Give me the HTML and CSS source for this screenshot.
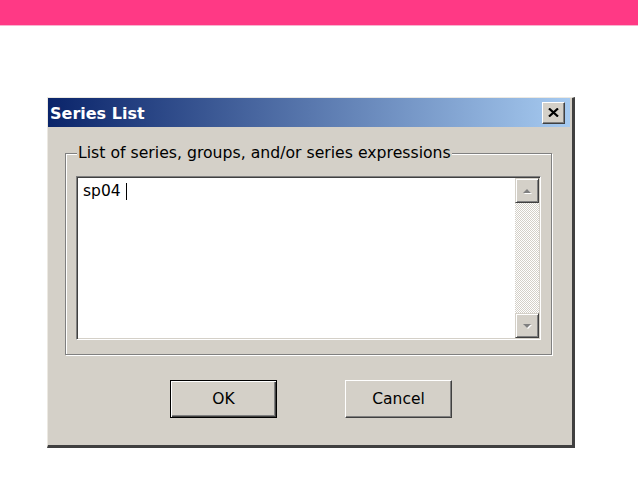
FILE: index.html
```html
<!DOCTYPE html>
<html lang="en">
<head>
    <meta charset="UTF-8">
    <title>Series List</title>
    <link rel="stylesheet" href="styles.css">
</head>
<body>
    <div class="topbar"></div>

    <div class="dialog">
        <div class="titlebar">
            <span class="title">Series List</span>
            <button class="close" title="Close">
                <svg width="11" height="9" viewBox="0 0 11 9">
                    <path d="M1 0.5 L10 8.5 M10 0.5 L1 8.5" stroke="#000" stroke-width="2.2" fill="none"/>
                </svg>
            </button>
        </div>

        <fieldset class="group">
            <legend>List of series, groups, and/or series expressions</legend>
            <div class="edit">
                <div class="edit-text">sp04 <span class="caret"></span></div>
                <div class="scroll">
                    <div class="scroll-btn"><span class="arrow up"></span></div>
                    <div class="scroll-track"></div>
                    <div class="scroll-btn"><span class="arrow down"></span></div>
                </div>
            </div>
        </fieldset>

        <div class="actions">
            <button class="btn default">OK</button>
            <button class="btn">Cancel</button>
        </div>
    </div>
</body>
</html>
```

FILE: styles.css
```css
body {
    margin: 0;
    background: #fff;
    font-family: "DejaVu Sans", Verdana, sans-serif;
    font-size: 15.5px;
    color: #000;
}
.topbar {
    height: 25px;
    background: #ff3985;
    border-bottom: 1px solid #f9b3cf;
}
.dialog {
    margin: 71px 0 0 47px;
    width: 528px;
    height: 351px;
    box-sizing: border-box;
    background: #d4d0c8;
    border-style: solid;
    border-width: 1px 3px 3px 1px;
    border-color: #ece9e2 #404040 #404040 #ece9e2;
    padding: 0 2px 2px 0;
    display: flex;
    flex-direction: column;
}
.titlebar {
    height: 29px;
    display: flex;
    align-items: center;
    justify-content: space-between;
    padding: 0 5px 0 2px;
    background: linear-gradient(to right, #0a246a, #a6caf0);
}
.title {
    color: #fff;
    font-weight: bold;
    font-size: 16px;
    padding-top: 1px;
}
.close {
    width: 23px;
    height: 22px;
    padding: 0;
    display: flex;
    align-items: center;
    justify-content: center;
    background: #d4d0c8;
    border: 1px solid;
    border-color: #fff #404040 #404040 #fff;
    box-shadow: inset -1px -1px #808080;
}
.group {
    margin: 17px 0 0 17px;
    width: 487px;
    box-sizing: border-box;
    padding: 14px 10px 14px 10px;
    border: 1px solid #808080;
    box-shadow: inset 1px 1px #fff, 1px 1px #fff;
}
.group legend {
    margin-left: 1px;
    padding: 0 1px;
    background: #d4d0c8;
    line-height: 18px;
    font-size: 15.7px;
}
.edit {
    height: 164px;
    display: flex;
    background: #fff;
    box-sizing: border-box;
    border: 1px solid;
    border-color: #808080 #fff #fff #808080;
    box-shadow: inset 1px 1px #404040, inset -1px -1px #d4d0c8;
    padding: 1px;
}
.edit-text {
    flex: 1;
    padding: 4px 5px;
    line-height: 18px;
    white-space: pre;
}
.caret {
    display: inline-block;
    width: 0;
    height: 17px;
    border-left: 1px solid #000;
    vertical-align: -4px;
}
.scroll {
    width: 24px;
    display: flex;
    flex-direction: column;
}
.scroll-btn {
    height: 25px;
    box-sizing: border-box;
    display: flex;
    align-items: center;
    justify-content: center;
    background: #d4d0c8;
    border: 1px solid;
    border-color: #d4d0c8 #404040 #404040 #d4d0c8;
    box-shadow: inset 1px 1px #fff, inset -1px -1px #808080;
}
.scroll-track {
    flex: 1;
    background: repeating-conic-gradient(#fff 0 25%, #d4d0c8 0 50%) 0 0 / 2px 2px;
}
.arrow {
    width: 0;
    height: 0;
    border-left: 4px solid transparent;
    border-right: 4px solid transparent;
}
.arrow.up {
    border-bottom: 4px solid #808080;
    filter: drop-shadow(1px 1px 0 #fff);
}
.arrow.down {
    border-top: 4px solid #808080;
    filter: drop-shadow(1px 1px 0 #fff);
}
.actions {
    margin-top: 25px;
    display: flex;
    justify-content: center;
    gap: 68px;
    padding-left: 4px;
}
.btn {
    width: 107px;
    height: 38px;
    font-family: inherit;
    font-size: 15.5px;
    color: #000;
    background: #d4d0c8;
    border: 1px solid;
    border-color: #fff #404040 #404040 #fff;
    box-shadow: inset -1px -1px #808080;
    padding: 0;
}
.btn.default {
    border-color: #000;
    box-shadow: inset 1px 1px #fff, inset -1px -1px #404040, inset -2px -2px #808080;
}
```
